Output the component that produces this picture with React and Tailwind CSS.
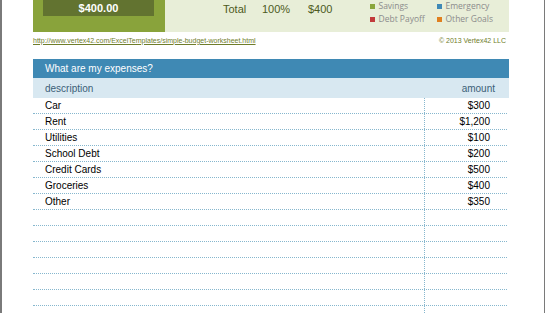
import React from 'react';

const expenses = [
  { name: 'Car', amount: '$300' },
  { name: 'Rent', amount: '$1,200' },
  { name: 'Utilities', amount: '$100' },
  { name: 'School Debt', amount: '$200' },
  { name: 'Credit Cards', amount: '$500' },
  { name: 'Groceries', amount: '$400' },
  { name: 'Other', amount: '$350' },
];

const rows = [...expenses, ...Array(7).fill({ name: '', amount: '' })];

const legend = [
  { label: 'Savings', color: 'bg-[#8aa63c]' },
  { label: 'Emergency', color: 'bg-[#3f89b6]' },
  { label: 'Debt Payoff', color: 'bg-[#c23b3b]' },
  { label: 'Other Goals', color: 'bg-[#e0801f]' },
];

const App = () => {
  return (
    <div
      className="w-[545px] h-[313px] overflow-hidden bg-white border-l-2 border-r border-[#7a7a7a] flex items-start"
      style={{ fontFamily: '"Liberation Sans", Arial, sans-serif' }}
    >
      <div className="ml-[31px] w-[476px] shrink-0">
        {/* top summary strip */}
        <div className="flex h-[32px]">
          <div className="w-[132px] bg-[#89a33b] pl-[10px]">
            <div className="w-[111px] h-[16px] bg-[#627330] flex items-center justify-center text-white font-bold text-[11px]">
              $400.00
            </div>
          </div>
          <div className="flex-1 bg-[#e8eed8] flex items-start">
            <div className="flex text-[11px] text-[#4d5a22] mt-[1px] ml-[58px]">
              <span className="w-[39px]">Total</span>
              <span className="w-[46px]">100%</span>
              <span>$400</span>
            </div>
            <div
              className="ml-[38px] grid grid-cols-[67px_auto] gap-y-[1px] text-[8.5px] text-[#8c8c8c] leading-[12px]"
              style={{ fontFamily: '"Open Sans", sans-serif' }}
            >
              {legend.map((l) => (
                <div key={l.label} className="flex items-center gap-[3px]">
                  <span className={`w-[5px] h-[5px] ${l.color}`} />
                  <span>{l.label}</span>
                </div>
              ))}
            </div>
          </div>
        </div>

        <div className="flex justify-between items-center h-[16px] mt-[1px] text-[7px] text-[#6f7d2a]">
          <span className="underline">http://www.vertex42.com/ExcelTemplates/simple-budget-worksheet.html</span>
          <span className="mr-[3px]">© 2013 Vertex42 LLC</span>
        </div>

        {/* expenses table */}
        <div className="mt-[10px] h-[19px] bg-[#3f89b4] text-white text-[10px] flex items-center pl-[12px]">
          What are my expenses?
        </div>
        <div className="h-[20px] bg-[#d8e8f1] text-[#3b5f78] text-[10px] flex items-center justify-between pl-[12px] pr-[14px]">
          <span>description</span>
          <span>amount</span>
        </div>
        <div className="w-[474px]">
          {rows.map((r, i) => (
            <div key={i} className="flex h-[16px] border-b border-dotted border-[#86b7ce] text-[10px] text-black">
              <div className="w-[391px] pl-[12px] flex items-center">{r.name}</div>
              <div className="flex-1 border-l border-dotted border-[#86b7ce] flex items-center justify-end pr-[17px]">
                {r.amount}
              </div>
            </div>
          ))}
        </div>
      </div>
    </div>
  );
};

export default App;
